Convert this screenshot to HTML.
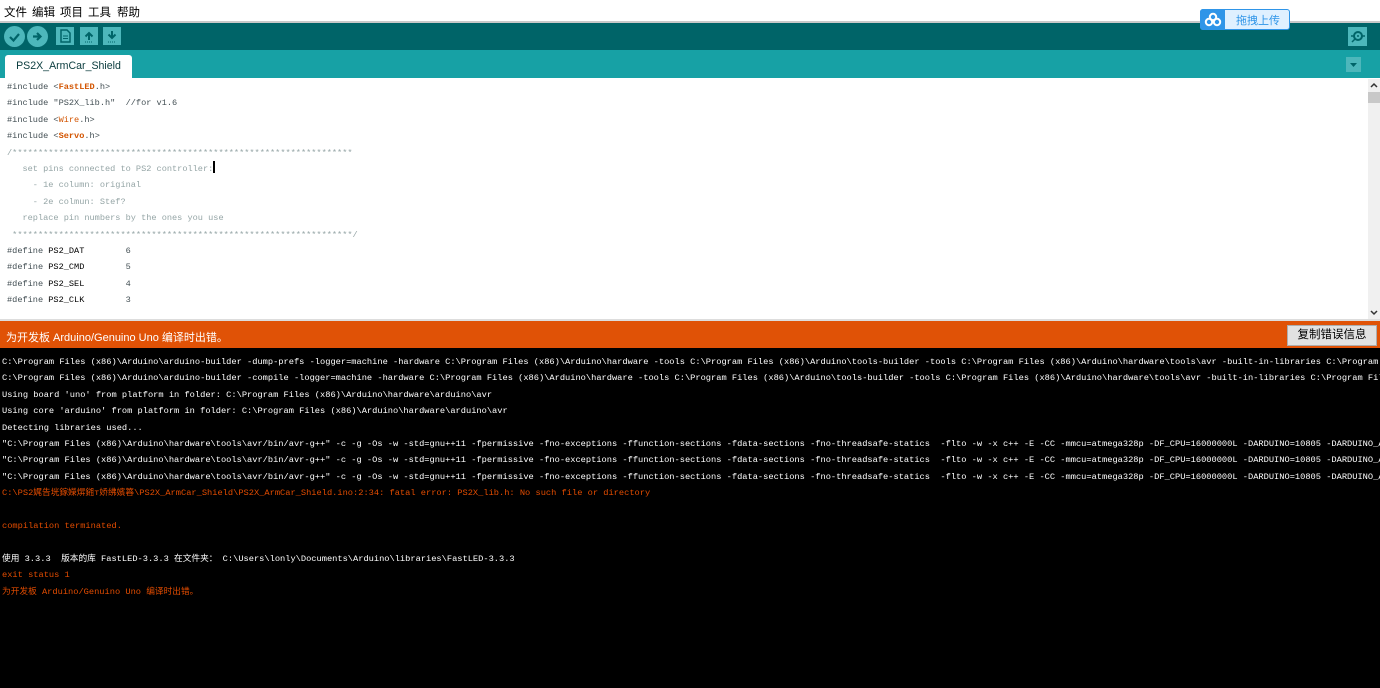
<!DOCTYPE html>
<html><head><meta charset="utf-8">
<style>
*{margin:0;padding:0;box-sizing:border-box}
body{width:1380px;height:688px;overflow:hidden;background:#fff;position:relative;font-family:"Liberation Sans","Noto Sans CJK SC",sans-serif}
.abs{position:absolute}
.menu{top:0;left:0;width:1380px;height:21px;background:#fff;font-size:11.5px;color:#000}
.menu span{position:absolute;top:4px}
.tb{top:21px;left:0;width:1380px;height:29px;background:#006468;border-top:2px solid #c9c9c9}
.tabbar{top:50px;left:0;width:1380px;height:28px;background:#17a1a5}
.tab{top:55px;left:5px;width:127px;height:23px;background:#fff;border-radius:3px 3px 0 0;font-size:10.6px;color:#0a3c3e;text-align:center;line-height:23px}
.btn{background:#4db7bb}
.code{left:0;width:1366px;font-family:"Liberation Mono","Noto Sans CJK SC",monospace;font-size:8.6px;white-space:pre;line-height:16.4px;height:16.4px;overflow:hidden}
.c{color:#434f54;left:7px}
.cm{color:#95a5a6}
.kw{color:#d35400;font-weight:bold}
.con{font-family:"Liberation Mono","Noto Sans CJK SC",monospace;font-size:8.7px;white-space:pre;line-height:16.4px;height:16.4px;left:2px;width:1378px;overflow:hidden;color:#fff}
.or{color:#e34c00}
</style></head><body>
<div class="abs menu"><span style="left:4px">文件</span><span style="left:32px">编辑</span><span style="left:60px">项目</span><span style="left:88px">工具</span><span style="left:117px">帮助</span></div>
<div class="abs tb"></div>
<div class="abs btn" style="left:4px;top:26px;width:21px;height:21px;border-radius:50%"></div>
<div class="abs btn" style="left:27px;top:26px;width:21px;height:21px;border-radius:50%"></div>
<svg class="abs" style="left:4px;top:26px" width="44" height="21"><path d="M6 11l3.5 3.5L15 8" stroke="#006468" stroke-width="2.2" fill="none"/><path d="M29 10.5h7M33 7l3.5 3.5L33 14" stroke="#006468" stroke-width="2.2" fill="none"/></svg>
<div class="abs btn" style="left:56px;top:27px;width:18px;height:18px"></div>
<div class="abs btn" style="left:80px;top:27px;width:18px;height:18px"></div>
<div class="abs btn" style="left:103px;top:27px;width:18px;height:18px"></div>
<svg class="abs" style="left:56px;top:27px" width="66" height="18"><path d="M5 3h6l3 3v9H5z" fill="none" stroke="#006468" stroke-width="1.5"/><path d="M7 9h5M7 11.5h5" stroke="#006468"/><path d="M33 13V6M29.5 9.5L33 6l3.5 3.5" stroke="#006468" stroke-width="2" fill="none"/><path d="M29 15h8" stroke="#006468" stroke-dasharray="1 1"/><path d="M56 4v7M52.5 7.5L56 11l3.5-3.5" stroke="#006468" stroke-width="2" fill="none"/><path d="M52 15h8" stroke="#006468" stroke-dasharray="1 1"/></svg>
<div class="abs btn" style="left:1348px;top:27px;width:19px;height:19px"></div>
<svg class="abs" style="left:1348px;top:27px" width="19" height="19"><circle cx="10" cy="9" r="4" fill="none" stroke="#006468" stroke-width="2"/><circle cx="10" cy="9" r="1" fill="#006468"/><path d="M3 9h3M14 9h3M7 12l-3 3" stroke="#006468" stroke-width="1.5"/></svg>
<div class="abs" style="left:1200px;top:9px;width:90px;height:21px;border:1px solid #2f95e8;border-radius:3px;background:#dff0ff"></div>
<div class="abs" style="left:1200px;top:9px;width:25px;height:21px;background:#2f95e8;border-radius:3px 0 0 3px"></div>
<svg class="abs" style="left:1203px;top:11px" width="20" height="17"><circle cx="10" cy="6" r="3.2" fill="none" stroke="#fff" stroke-width="2"/><circle cx="6" cy="11" r="3.2" fill="none" stroke="#fff" stroke-width="2"/><circle cx="14" cy="11" r="3.2" fill="none" stroke="#fff" stroke-width="2"/></svg>
<div class="abs" style="left:1236px;top:12px;font-size:11px;color:#2f95e8">拖拽上传</div>
<div class="abs tabbar"></div>
<div class="abs tab">PS2X_ArmCar_Shield</div>
<div class="abs btn" style="left:1346px;top:57px;width:15px;height:15px;background:#4db7bb"></div>
<svg class="abs" style="left:1346px;top:57px" width="15" height="15"><path d="M4 6h7l-3.5 4z" fill="#006468"/></svg>
<div class="abs" style="left:1368px;top:79px;width:12px;height:240px;background:#f0f0f0"></div>
<div class="abs" style="left:1368px;top:92px;width:12px;height:11px;background:#c8c8c8"></div>
<svg class="abs" style="left:1368px;top:79px" width="12" height="240"><path d="M3 8l3-3 3 3M3 232l3 3 3-3" stroke="#333" stroke-width="1.5" fill="none"/></svg>
<div class="abs code c" style="top:79px">#include &lt;<span class="kw">FastLED</span>.h&gt;</div>
<div class="abs code c" style="top:95.4px">#include "PS2X_lib.h"  //for v1.6</div>
<div class="abs code c" style="top:111.8px">#include &lt;<span class="kw" style="font-weight:normal">Wire</span>.h&gt;</div>
<div class="abs code c" style="top:128.2px">#include &lt;<span class="kw">Servo</span>.h&gt;</div>
<div class="abs code c cm" style="top:144.6px">/******************************************************************</div>
<div class="abs code c cm" style="top:161px">   set pins connected to PS2 controller:<span style="display:inline-block;width:1.5px;height:12px;background:#000;vertical-align:-2px"></span></div>
<div class="abs code c cm" style="top:177.4px">     - 1e column: original</div>
<div class="abs code c cm" style="top:193.8px">     - 2e colmun: Stef?</div>
<div class="abs code c cm" style="top:210.2px">   replace pin numbers by the ones you use</div>
<div class="abs code c cm" style="top:226.6px"> ******************************************************************/</div>
<div class="abs code c" style="top:243px">#define <b style="color:#000;font-weight:normal">PS2_DAT</b>        6</div>
<div class="abs code c" style="top:259.4px">#define <b style="color:#000;font-weight:normal">PS2_CMD</b>        5</div>
<div class="abs code c" style="top:275.8px">#define <b style="color:#000;font-weight:normal">PS2_SEL</b>        4</div>
<div class="abs code c" style="top:292.2px">#define <b style="color:#000;font-weight:normal">PS2_CLK</b>        3</div>
<div class="abs" style="left:0;top:319px;width:1380px;height:2px;background:#ddd"></div>
<div class="abs" style="left:0;top:321px;width:1380px;height:27px;background:#e05206"></div>
<div class="abs" style="left:6px;top:329px;font-size:11px;color:#fff">为开发板 Arduino/Genuino Uno 编译时出错。</div>
<div class="abs" style="left:1287px;top:325px;width:90px;height:21px;background:#e1e1e1;border:1px solid #adadad;font-size:11.5px;text-align:center;line-height:19px;color:#000">复制错误信息</div>
<div class="abs" style="left:0;top:348px;width:1380px;height:340px;background:#000"></div>
<div class="abs con" style="top:354px">C:\Program Files (x86)\Arduino\arduino-builder -dump-prefs -logger=machine -hardware C:\Program Files (x86)\Arduino\hardware -tools C:\Program Files (x86)\Arduino\tools-builder -tools C:\Program Files (x86)\Arduino\hardware\tools\avr -built-in-libraries C:\Program Files</div>
<div class="abs con" style="top:370.4px">C:\Program Files (x86)\Arduino\arduino-builder -compile -logger=machine -hardware C:\Program Files (x86)\Arduino\hardware -tools C:\Program Files (x86)\Arduino\tools-builder -tools C:\Program Files (x86)\Arduino\hardware\tools\avr -built-in-libraries C:\Program Files</div>
<div class="abs con" style="top:386.8px">Using board 'uno' from platform in folder: C:\Program Files (x86)\Arduino\hardware\arduino\avr</div>
<div class="abs con" style="top:403.2px">Using core 'arduino' from platform in folder: C:\Program Files (x86)\Arduino\hardware\arduino\avr</div>
<div class="abs con" style="top:419.6px">Detecting libraries used...</div>
<div class="abs con" style="top:436px">"C:\Program Files (x86)\Arduino\hardware\tools\avr/bin/avr-g++" -c -g -Os -w -std=gnu++11 -fpermissive -fno-exceptions -ffunction-sections -fdata-sections -fno-threadsafe-statics  -flto -w -x c++ -E -CC -mmcu=atmega328p -DF_CPU=16000000L -DARDUINO=10805 -DARDUINO_AVR_UNO</div>
<div class="abs con" style="top:452.4px">"C:\Program Files (x86)\Arduino\hardware\tools\avr/bin/avr-g++" -c -g -Os -w -std=gnu++11 -fpermissive -fno-exceptions -ffunction-sections -fdata-sections -fno-threadsafe-statics  -flto -w -x c++ -E -CC -mmcu=atmega328p -DF_CPU=16000000L -DARDUINO=10805 -DARDUINO_AVR_UNO</div>
<div class="abs con" style="top:468.8px">"C:\Program Files (x86)\Arduino\hardware\tools\avr/bin/avr-g++" -c -g -Os -w -std=gnu++11 -fpermissive -fno-exceptions -ffunction-sections -fdata-sections -fno-threadsafe-statics  -flto -w -x c++ -E -CC -mmcu=atmega328p -DF_CPU=16000000L -DARDUINO=10805 -DARDUINO_AVR_UNO</div>
<div class="abs con or" style="top:485.2px">C:\PS2娓告垙鎵嬫焺鎺т娇绋嬪簭\PS2X_ArmCar_Shield\PS2X_ArmCar_Shield.ino:2:34: fatal error: PS2X_lib.h: No such file or directory</div>
<div class="abs con or" style="top:518px">compilation terminated.</div>
<div class="abs con" style="top:550.8px">使用 3.3.3  版本的库 FastLED-3.3.3 在文件夹： C:\Users\lonly\Documents\Arduino\libraries\FastLED-3.3.3</div>
<div class="abs con or" style="top:567.2px">exit status 1</div>
<div class="abs con or" style="top:583.6px">为开发板 Arduino/Genuino Uno 编译时出错。</div>
</body></html>
